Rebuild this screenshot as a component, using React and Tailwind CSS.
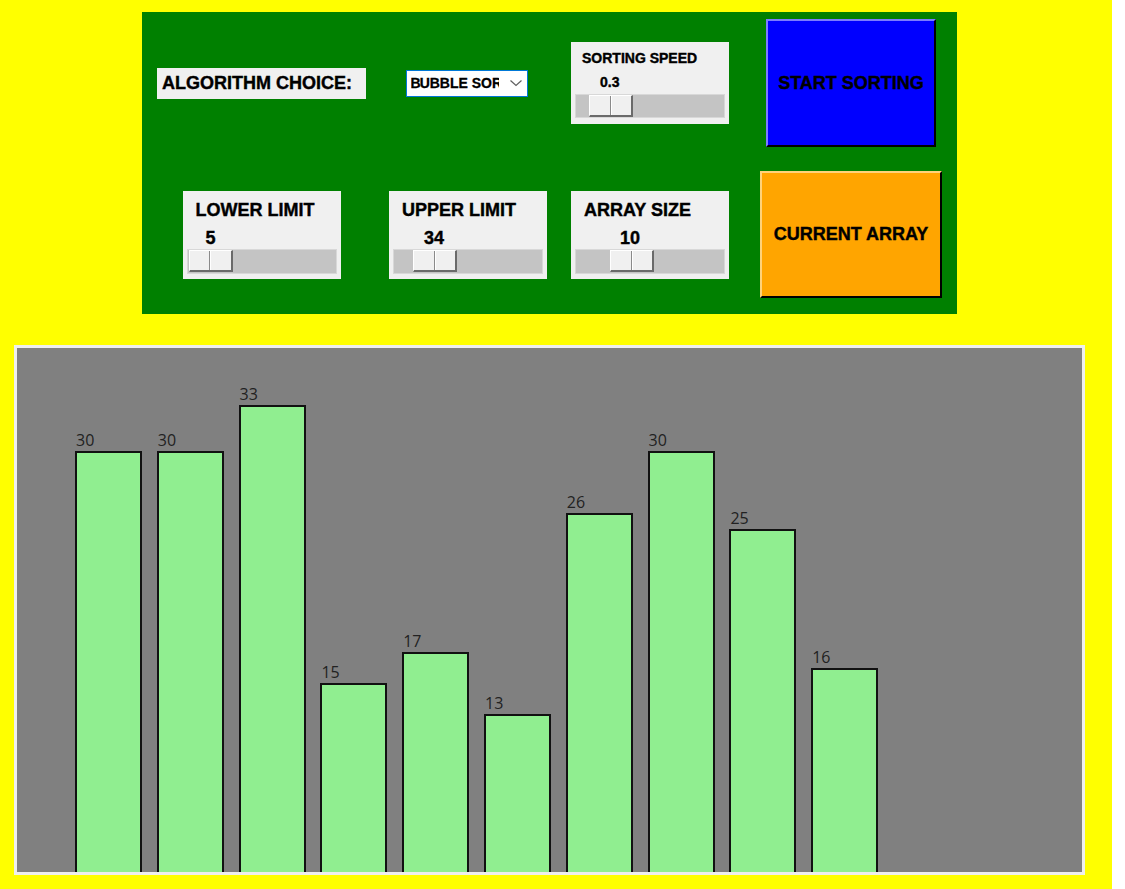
import React from 'react';

const values = [30, 30, 33, 15, 17, 13, 26, 30, 25, 16];

const barHeight = (v) => Math.round(15.45 * v - 42.9);

const Handle = () => (
  <div className="flex h-[22px] w-[44px] border-t border-l border-t-white border-l-white border-b-2 border-r-2 border-b-[#6a6a6a] border-r-[#6a6a6a] bg-[#f0f0f0]">
    <div className="flex-1 border-r border-r-[#8a8a8a]" />
    <div className="flex-1 border-l border-l-white" />
  </div>
);

const Scale = ({ label, value, small, labelClass, valueClass, handleClass }) => (
  <div className={`flex flex-col bg-[#f0f0f0] px-[4px] w-[158px] ${small ? 'h-[82px] pt-[9px] pb-[6px]' : 'h-[88px] pt-[10px] pb-[5px]'}`}>
    <div className={`font-bold leading-none whitespace-nowrap [-webkit-text-stroke:0.4px_black] ${small ? 'text-[14px] h-[14px]' : 'text-[18px] h-[18px]'} ${labelClass}`}>
      {label}
    </div>
    <div className={`font-bold leading-none whitespace-nowrap [-webkit-text-stroke:0.4px_black] ${small ? 'text-[14px] h-[14px] mt-[10px]' : 'text-[18px] h-[18px] mt-[10px]'} ${valueClass}`}>
      {value}
    </div>
    <div className={`flex items-center bg-[#c4c4c4] border border-[#d8d8d8] ${small ? 'mt-[5px] h-[24px]' : 'mt-[2px] h-[25px]'}`}>
      <div className={handleClass}>
        <Handle />
      </div>
    </div>
  </div>
);

export default function App() {
  return (
    <div className="w-[1112px] h-[889px] bg-[#ffff00] pt-[12px] font-['Liberation_Sans',Arial,sans-serif] text-black">
      {/* Control panel */}
      <div className="ml-[142px] w-[815px] h-[302px] bg-[#008000] pt-[7px] grid grid-cols-[239px_174px_190px_212px] grid-rows-[128px_127px] gap-y-[24px] items-center justify-items-center">
        <div className="w-[209px] h-[31px] bg-[#f0f0f0] flex items-center pl-[5px] text-[18px] font-bold whitespace-nowrap [-webkit-text-stroke:0.4px_black]">
          ALGORITHM CHOICE:
        </div>

        <div className="w-[122px] h-[27px] bg-white border border-[#0078d7] flex items-center pl-[4px] ml-[-3px]">
          <div className="w-[88px] overflow-hidden whitespace-nowrap text-[14px] font-bold leading-none flex items-center [-webkit-text-stroke:0.3px_black]">
            <span>B</span>
            <span className="inline-block w-px h-[16px] bg-black mx-[-0.5px]" />
            <span>UBBLE SORT</span>
          </div>
          <svg width="14" height="10" viewBox="0 0 14 10" className="ml-[10px]">
            <polyline points="1.5,2.5 7,7.5 12.5,2.5" fill="none" stroke="#606060" strokeWidth="1.2" />
          </svg>
        </div>

        <Scale
          label="SORTING SPEED"
          value="0.3"
          small
          labelClass="pl-[7px]"
          valueClass="pl-[25px]"
          handleClass="ml-[13px]"
        />

        <button className="w-[170px] h-[128px] bg-[#0000ff] border-t-2 border-l-2 border-t-[#7c7cff] border-l-[#7c7cff] border-b-2 border-r-2 border-b-black border-r-black text-[18px] font-bold whitespace-nowrap [-webkit-text-stroke:0.4px_black]">
          START SORTING
        </button>

        <Scale
          label="LOWER LIMIT"
          value="5"
          labelClass="pl-[9px]"
          valueClass="pl-[19px]"
          handleClass="ml-[1px]"
        />
        <Scale
          label="UPPER LIMIT"
          value="34"
          labelClass="pl-[9px]"
          valueClass="pl-[31px]"
          handleClass="ml-[19px]"
        />
        <Scale
          label="ARRAY SIZE"
          value="10"
          labelClass="pl-[9px]"
          valueClass="pl-[45px]"
          handleClass="ml-[34px]"
        />

        <button className="w-[182px] h-[127px] bg-[#ffa500] border-t-2 border-l-2 border-t-[#ffd27a] border-l-[#ffd27a] border-b-2 border-r-2 border-b-black border-r-black text-[18px] font-bold whitespace-nowrap [-webkit-text-stroke:0.4px_black]">
          CURRENT ARRAY
        </button>
      </div>

      {/* Canvas */}
      <div className="ml-[14px] mt-[31px] w-[1071px] h-[530px] border-[3px] border-[#efefef] bg-[#808080] flex items-end pl-[58px] gap-[14.8px]">
        {values.map((v, i) => (
          <div key={i} className="flex flex-col items-start">
            <span className="pl-[1px] mb-[3px] text-[16px] leading-none text-[#222] font-['Open_Sans','Noto_Sans',sans-serif]">
              {v}
            </span>
            <div
              className="w-[67px] bg-[#90ee90] border-2 border-b-0 border-[#111]"
              style={{ height: barHeight(v) }}
            />
          </div>
        ))}
      </div>
    </div>
  );
}
